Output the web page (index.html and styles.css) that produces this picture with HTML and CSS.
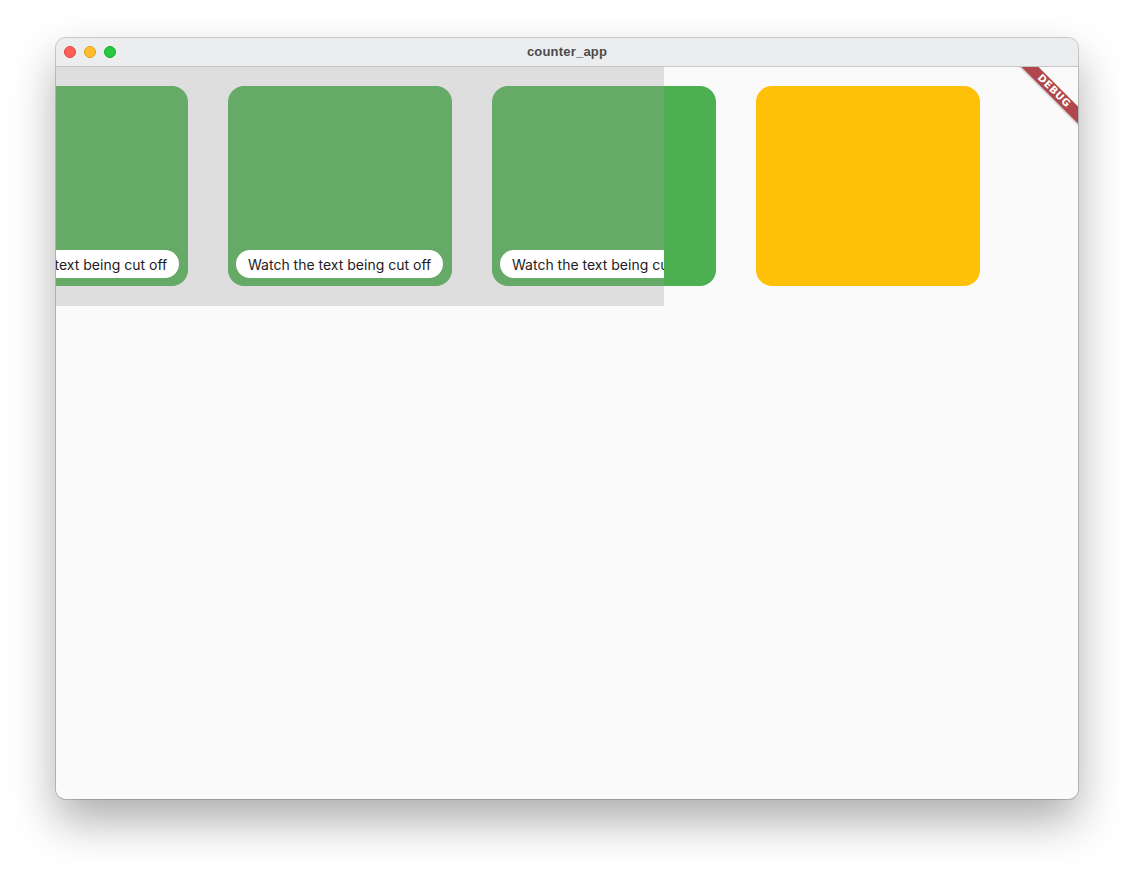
FILE: index.html
```html
<!DOCTYPE html>
<html>
<head>
<meta charset="utf-8">
<link rel="stylesheet" href="styles.css">
</head>
<body>
<div class="window">
  <div class="titlebar">
    <div class="lights">
      <span class="light red"></span>
      <span class="light yellow"></span>
      <span class="light green"></span>
    </div>
    <div class="title">counter_app</div>
    <div></div>
  </div>
  <div class="content">
    <div class="row">
      <div class="card green-card"></div>
      <div class="card green-card"></div>
      <div class="card green-card"></div>
      <div class="card amber-card"></div>
    </div>
    <div class="overlay">
      <div class="row">
        <div class="slot"><span class="pill">Watch the text being cut off</span></div>
        <div class="slot"><span class="pill">Watch the text being cut off</span></div>
        <div class="slot"><span class="pill">Watch the text being cut off</span></div>
      </div>
    </div>
    <div class="banner">DEBUG</div>
  </div>
</div>
</body>
</html>
```

FILE: styles.css
```css
html, body {
  margin: 0;
  padding: 0;
  background: #ffffff;
}
html {
  height: 100%;
}
body {
  box-sizing: border-box;
  min-height: 873px;
  padding: 38px 0 0 56px;
}
.window {
  width: 1022px;
  height: 761px;
  border-radius: 10px;
  overflow: hidden;
  background: #fafafa;
  box-shadow: 0 0 0 1px rgba(0,0,0,0.18), 0 22px 45px rgba(0,0,0,0.32);
  display: flex;
  flex-direction: column;
}
.titlebar {
  height: 28px;
  flex-shrink: 0;
  background: #ecedef;
  border-bottom: 1px solid #c6c6c6;
  display: grid;
  grid-template-columns: 1fr auto 1fr;
  align-items: center;
}
.lights {
  display: flex;
  gap: 8px;
  padding-left: 8px;
}
.light {
  width: 12px;
  height: 12px;
  border-radius: 50%;
  box-sizing: border-box;
}
.light.red { background: #fe5f57; border: 0.5px solid #e2463f; }
.light.yellow { background: #febc2e; border: 0.5px solid #e1a116; }
.light.green { background: #28c840; border: 0.5px solid #12ac28; }
.title {
  font-family: "Liberation Sans", Arial, sans-serif;
  font-weight: bold;
  font-size: 13px;
  letter-spacing: 0.2px;
  color: #4b4b4b;
  padding-bottom: 2px;
}
.content {
  position: relative;
  flex: 1;
  overflow: hidden;
  background: #fafafa;
}
.row {
  display: flex;
  gap: 40px;
  padding-top: 19px;
  margin-left: -92px;
}
.card {
  width: 224px;
  height: 200px;
  flex-shrink: 0;
  border-radius: 16px;
}
.green-card { background: #4caf50; }
.amber-card { background: #ffc107; }
.overlay {
  position: absolute;
  left: 0;
  top: 0;
  width: 608px;
  height: 239px;
  background: rgba(158,158,158,0.3);
  overflow: hidden;
}
.slot {
  width: 224px;
  height: 200px;
  flex-shrink: 0;
  box-sizing: border-box;
  padding: 8px;
  display: flex;
  align-items: flex-end;
}
.pill {
  display: block;
  height: 28px;
  line-height: 29px;
  padding: 0 12px;
  border-radius: 14px;
  background: #ffffff;
  color: #1d1b1e;
  font-family: Inter, "Noto Sans", sans-serif;
  font-size: 14px;
  white-space: nowrap;
}
.banner {
  position: absolute;
  left: 943px;
  top: 18px;
  width: 110px;
  height: 12px;
  line-height: 12px;
  transform: rotate(45deg);
  background: #b0474a;
  color: #ffffff;
  font-family: "DejaVu Sans", sans-serif;
  font-weight: 900;
  font-size: 10px;
  letter-spacing: 0.6px;
  text-align: center;
  box-shadow: 0 1px 2px rgba(0,0,0,0.25);
}
```
